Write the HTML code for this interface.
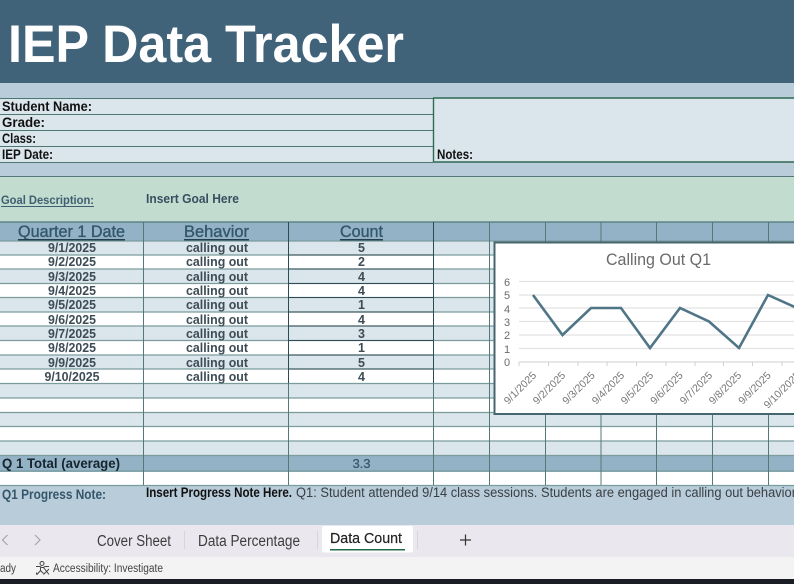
<!DOCTYPE html>
<html><head><meta charset="utf-8"><style>
html,body{margin:0;padding:0;width:794px;height:584px;overflow:hidden;background:#fff}
svg{display:block}
text{font-family:"Liberation Sans",sans-serif}
.b{font-weight:bold}
.d{font-size:12.5px;font-weight:bold;fill:#3d4c55;text-anchor:middle}
.y{font-size:11px;fill:#6a6a6a;text-anchor:middle}
.x{font-size:10.5px;fill:#777;text-anchor:end}
</style></head><body>
<svg width="794" height="584" viewBox="0 0 794 584" xmlns="http://www.w3.org/2000/svg">
<rect width="794" height="584" fill="#fff"/>
<rect width="794" height="83" fill="#41637a"/>
<text x="8" y="62" class="b" font-size="53" fill="#fff" textLength="396" lengthAdjust="spacingAndGlyphs">IEP Data Tracker</text>
<rect y="83" width="794" height="15" fill="#b8ccd9"/>
<rect y="98" width="794" height="64" fill="#dbe5ec"/>
<rect y="162" width="794" height="14" fill="#b8ccd9"/>
<path d="M0 98.5H433M0 114.5H433M0 130.5H433M0 146.5H433M0 162.5H433" stroke="#4f7772" stroke-width="1" fill="none"/>
<path d="M433.5 98V162.5M433 98H794M433 162H794" stroke="#2f6a52" stroke-width="1.4" fill="none"/>
<g fill="#111" class="b" font-size="13.5">
<text x="2" y="111" textLength="90" lengthAdjust="spacingAndGlyphs">Student Name:</text>
<text x="2" y="127" textLength="43" lengthAdjust="spacingAndGlyphs">Grade:</text>
<text x="2" y="143" textLength="34" lengthAdjust="spacingAndGlyphs">Class:</text>
<text x="2" y="159" textLength="51" lengthAdjust="spacingAndGlyphs">IEP Date:</text>
<text x="437" y="159" textLength="36" lengthAdjust="spacingAndGlyphs">Notes:</text>
</g>
<rect y="177" width="794" height="45" fill="#c3dcd0"/>
<path d="M0 176.5H794" stroke="#55767a" stroke-width="1"/>
<text x="1" y="204" class="b" font-size="11.5" fill="#3f5f70" textLength="93" lengthAdjust="spacingAndGlyphs">Goal Description:</text>
<rect x="1" y="206" width="93" height="1" fill="#3f5f70"/>
<text x="146" y="203" class="b" font-size="12.5" fill="#37505f" textLength="93" lengthAdjust="spacingAndGlyphs">Insert Goal Here</text>
<!-- table bands -->
<rect y="222" width="794" height="19" fill="#93b2c6"/>
<g fill="#dbe5ec">
<rect y="241" width="794" height="14"/><rect y="269" width="794" height="14"/><rect y="298" width="794" height="14"/><rect y="326" width="794" height="14"/><rect y="355" width="794" height="14"/><rect y="383" width="794" height="15"/><rect y="412" width="794" height="14"/><rect y="441" width="794" height="14"/>
</g>
<rect y="455" width="794" height="17" fill="#93b2c6"/>
<rect y="486" width="794" height="39" fill="#b8ccd9"/>
<path d="M0 222H794" stroke="#5f8486" stroke-width="1.5"/>
<path d="M0 241H794M0 255H794M0 269H794M0 283.5H794M0 297.5H794M0 312H794M0 326H794M0 340.5H794M0 355H794M0 369H794M0 383.5H794M0 398H794M0 412.5H794M0 426.5H794M0 441H794M0 455.5H794M0 471H794M0 485.5H794" stroke="#7a9c9c" stroke-width="1.2" fill="none"/>
<path d="M288 255H433M288 269H433M288 283.5H433M288 297.5H433M288 312H433M288 326H433M288 340.5H433M288 355H433M288 369H433" stroke="#2e4a52" stroke-width="1" fill="none"/>
<path d="M143.5 222V485M288.5 222V485M433.5 222V485M489.5 222V485M545.5 222V485M601 222V485M656.5 222V485M712.5 222V485M768.5 222V485" stroke="#55797a" stroke-width="1" fill="none"/>
<path d="M288.5 222V383M433.5 222V383" stroke="#2e4a52" stroke-width="1" fill="none"/>
<!-- headers -->
<g font-size="16.5" fill="#33566b" stroke="#33566b" stroke-width=".35">
<text x="18" y="237" textLength="107" lengthAdjust="spacingAndGlyphs">Quarter 1 Date</text>
<text x="184" y="237" textLength="65" lengthAdjust="spacingAndGlyphs">Behavior</text>
<text x="340" y="237" textLength="43" lengthAdjust="spacingAndGlyphs">Count</text>
</g>
<g fill="#22404f"><rect x="18" y="239" width="107" height="1.5"/><rect x="184" y="239" width="65" height="1.5"/><rect x="340" y="239" width="43" height="1.5"/></g>
<!-- rows -->
<g>
<text class="d" x="72" y="252" textLength="48" lengthAdjust="spacingAndGlyphs">9/1/2025</text><text class="d" x="72" y="266" textLength="48" lengthAdjust="spacingAndGlyphs">9/2/2025</text><text class="d" x="72" y="281" textLength="48" lengthAdjust="spacingAndGlyphs">9/3/2025</text><text class="d" x="72" y="295" textLength="48" lengthAdjust="spacingAndGlyphs">9/4/2025</text><text class="d" x="72" y="309" textLength="48" lengthAdjust="spacingAndGlyphs">9/5/2025</text><text class="d" x="72" y="324" textLength="48" lengthAdjust="spacingAndGlyphs">9/6/2025</text><text class="d" x="72" y="338" textLength="48" lengthAdjust="spacingAndGlyphs">9/7/2025</text><text class="d" x="72" y="352" textLength="48" lengthAdjust="spacingAndGlyphs">9/8/2025</text><text class="d" x="72" y="367" textLength="48" lengthAdjust="spacingAndGlyphs">9/9/2025</text><text class="d" x="72" y="381" textLength="55" lengthAdjust="spacingAndGlyphs">9/10/2025</text>
<text class="d" x="217" y="252" textLength="62" lengthAdjust="spacingAndGlyphs">calling out</text><text class="d" x="217" y="266" textLength="62" lengthAdjust="spacingAndGlyphs">calling out</text><text class="d" x="217" y="281" textLength="62" lengthAdjust="spacingAndGlyphs">calling out</text><text class="d" x="217" y="295" textLength="62" lengthAdjust="spacingAndGlyphs">calling out</text><text class="d" x="217" y="309" textLength="62" lengthAdjust="spacingAndGlyphs">calling out</text><text class="d" x="217" y="324" textLength="62" lengthAdjust="spacingAndGlyphs">calling out</text><text class="d" x="217" y="338" textLength="62" lengthAdjust="spacingAndGlyphs">calling out</text><text class="d" x="217" y="352" textLength="62" lengthAdjust="spacingAndGlyphs">calling out</text><text class="d" x="217" y="367" textLength="62" lengthAdjust="spacingAndGlyphs">calling out</text><text class="d" x="217" y="381" textLength="62" lengthAdjust="spacingAndGlyphs">calling out</text>
<text class="d" x="361.5" y="252">5</text><text class="d" x="361.5" y="266">2</text><text class="d" x="361.5" y="281">4</text><text class="d" x="361.5" y="295">4</text><text class="d" x="361.5" y="309">1</text><text class="d" x="361.5" y="324">4</text><text class="d" x="361.5" y="338">3</text><text class="d" x="361.5" y="352">1</text><text class="d" x="361.5" y="367">5</text><text class="d" x="361.5" y="381">4</text>
</g>
<text x="2" y="468" class="b" font-size="14" fill="#16242c" textLength="118" lengthAdjust="spacingAndGlyphs">Q 1 Total (average)</text>
<text x="361.5" y="468" font-size="13" fill="#3b5a6c" stroke="#3b5a6c" stroke-width=".3" text-anchor="middle">3.3</text>
<text x="2" y="499" class="b" font-size="13.5" fill="#35566a" textLength="104" lengthAdjust="spacingAndGlyphs">Q1 Progress Note:</text>
<text x="146" y="497" class="b" font-size="13.5" fill="#111" textLength="146" lengthAdjust="spacingAndGlyphs">Insert Progress Note Here.</text>
<text x="296" y="497" font-size="13.5" fill="#3a3f44" textLength="500" lengthAdjust="spacingAndGlyphs">Q1: Student attended 9/14 class sessions. Students are engaged in calling out behavior</text>
<!-- chart -->
<rect x="494.5" y="242.5" width="302" height="171.5" fill="#fff" stroke="#46666f" stroke-width="2"/>
<text x="658.5" y="265" text-anchor="middle" font-size="16.5" fill="#6a6a6a" textLength="105" lengthAdjust="spacingAndGlyphs">Calling Out Q1</text>
<path d="M519 281.5H794M519 295H794M519 308H794M519 321.5H794M519 335H794M519 348.5H794" stroke="#e2e2e2" stroke-width="1.2" fill="none"/>
<path d="M519 362H794M519 362v4M548.5 362v4M578 362v4M607 362v4M636.5 362v4M666 362v4M695 362v4M723.5 362v4M752.5 362v4M782 362v4" stroke="#cfcfcf" stroke-width="1" fill="none"/>
<g><text class="y" x="507" y="286">6</text><text class="y" x="507" y="299">5</text><text class="y" x="507" y="313">4</text><text class="y" x="507" y="326">3</text><text class="y" x="507" y="339">2</text><text class="y" x="507" y="353">1</text><text class="y" x="507" y="366">0</text></g>
<polyline points="533,295 562.5,335 591,308 621,308 650,348 680,308 709,321.5 739,348 768,295 797,308" fill="none" stroke="#4f7587" stroke-width="2.6" stroke-linejoin="miter"/>
<g>
<text class="x" transform="translate(537,376) rotate(-45)">9/1/2025</text>
<text class="x" transform="translate(566,376) rotate(-45)">9/2/2025</text>
<text class="x" transform="translate(595.5,376) rotate(-45)">9/3/2025</text>
<text class="x" transform="translate(625,376) rotate(-45)">9/4/2025</text>
<text class="x" transform="translate(654,376) rotate(-45)">9/5/2025</text>
<text class="x" transform="translate(683.5,376) rotate(-45)">9/6/2025</text>
<text class="x" transform="translate(713,376) rotate(-45)">9/7/2025</text>
<text class="x" transform="translate(742,376) rotate(-45)">9/8/2025</text>
<text class="x" transform="translate(771.5,376) rotate(-45)">9/9/2025</text>
<text class="x" transform="translate(801,376) rotate(-45)">9/10/2025</text>
</g>
<!-- tabs -->
<rect y="525" width="794" height="32" fill="#eae8ee"/>
<rect y="557" width="794" height="22" fill="#f4f3f4"/>
<rect y="579" width="794" height="5" fill="#1b1d24"/>
<path d="M7.5 535l-5 5 5 5M35 535l5 5-5 5" stroke="#a5a5aa" stroke-width="1.2" fill="none"/>
<text x="97" y="546" font-size="15.5" fill="#3c3c3c" textLength="74" lengthAdjust="spacingAndGlyphs">Cover Sheet</text>
<rect x="184" y="531" width="1" height="18" fill="#d8d6dc"/>
<text x="198" y="546" font-size="15.5" fill="#3c3c3c" textLength="102" lengthAdjust="spacingAndGlyphs">Data Percentage</text>
<rect x="317" y="531" width="1" height="18" fill="#d8d6dc"/>
<rect x="322" y="526" width="91" height="26.5" rx="2" fill="#fff"/>
<text x="330" y="543" font-size="15" fill="#222" stroke="#222" stroke-width=".2" textLength="72" lengthAdjust="spacingAndGlyphs">Data Count</text>
<rect x="330" y="549" width="75" height="1.5" fill="#1f6b45"/>
<rect x="417" y="531" width="1" height="18" fill="#d8d6dc"/>
<path d="M465.5 534.5v11M460 540h11" stroke="#333" stroke-width="1.2" fill="none"/>
<text x="0" y="572" font-size="11.5" fill="#444" textLength="16" lengthAdjust="spacingAndGlyphs">ady</text>
<g fill="none" stroke="#444" stroke-width="1">
<circle cx="42" cy="563.5" r="2"/>
<path d="M36 566.5l4 0 1.5 1h2l1.500-1 4 0M40.500 567.500l0 3-3 3.500c-1 1 -1.500-.5-.5-1.500M43.500 567.500l5.500 7M43.500 574.500l5.500-5.500M40.500 570.500l3 3"/>
</g>
<text x="53" y="572" font-size="11.5" fill="#444" textLength="110" lengthAdjust="spacingAndGlyphs">Accessibility: Investigate</text>
</svg>
</body></html>
